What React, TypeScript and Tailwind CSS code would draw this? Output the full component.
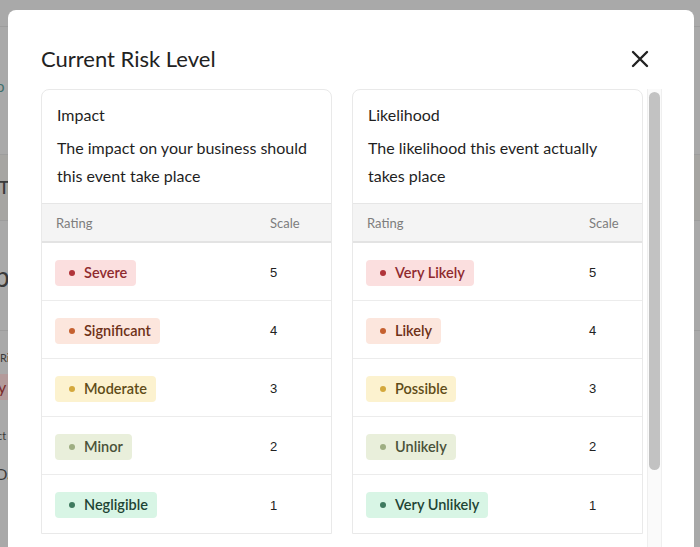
import React from "react";

type Item = { label: string; scale: number; bg: string; text: string; dot: string };

const impact: Item[] = [
  { label: "Severe", scale: 5, bg: "bg-[#fbdfdf]", text: "text-[#8f2a2e]", dot: "bg-[#b0343a]" },
  { label: "Significant", scale: 4, bg: "bg-[#fce6dd]", text: "text-[#6e3117]", dot: "bg-[#c5602f]" },
  { label: "Moderate", scale: 3, bg: "bg-[#fcf2cf]", text: "text-[#5f4c17]", dot: "bg-[#d4a83c]" },
  { label: "Minor", scale: 2, bg: "bg-[#e9efdb]", text: "text-[#4a5239]", dot: "bg-[#9eae82]" },
  { label: "Negligible", scale: 1, bg: "bg-[#d8f5e5]", text: "text-[#1e4434]", dot: "bg-[#3f7a5f]" },
];

const likelihood: Item[] = [
  { label: "Very Likely", scale: 5, bg: "bg-[#fbdfdf]", text: "text-[#8f2a2e]", dot: "bg-[#b0343a]" },
  { label: "Likely", scale: 4, bg: "bg-[#fce6dd]", text: "text-[#6e3117]", dot: "bg-[#c5602f]" },
  { label: "Possible", scale: 3, bg: "bg-[#fcf2cf]", text: "text-[#5f4c17]", dot: "bg-[#d4a83c]" },
  { label: "Unlikely", scale: 2, bg: "bg-[#e9efdb]", text: "text-[#4a5239]", dot: "bg-[#9eae82]" },
  { label: "Very Unlikely", scale: 1, bg: "bg-[#d8f5e5]", text: "text-[#1e4434]", dot: "bg-[#3f7a5f]" },
];

function Card({
  title,
  desc,
  items,
  cols,
}: {
  title: string;
  desc: React.ReactNode;
  items: Item[];
  cols: string;
}) {
  return (
    <div className="w-[291px] shrink-0 self-start rounded-t-lg border border-[#e9e9e9] bg-white">
      <div className="px-[15px] pt-[13px] pb-[13px] text-[#1f1f1f]">
        <div className="text-[16px] leading-[24px]">{title}</div>
        <div className="mt-[7px] whitespace-nowrap text-[16px] leading-[28px]">{desc}</div>
      </div>
      <div
        className={`grid ${cols} h-[40px] items-center border-t border-b-2 border-t-[#e6e6e6] border-b-[#e3e3e3] bg-[#f4f4f4] px-[14px] pt-[3px] text-[13px] text-[#7d7d7d]`}
      >
        <div>Rating</div>
        <div>Scale</div>
      </div>
      {items.map((it, i) => (
        <div
          key={it.label}
          className={`grid ${cols} h-[58px] items-center px-[13px] ${
            i < items.length - 1 ? "border-b border-[#ececec]" : ""
          }`}
        >
          <div>
            <span
              className={`inline-flex h-[26px] items-center gap-[9px] rounded-[4px] pl-[14px] pr-[9px] text-[14.5px] font-semibold ${it.bg} ${it.text}`}
            >
              <span className={`h-[6px] w-[6px] rounded-full ${it.dot}`} />
              {it.label}
            </span>
          </div>
          <div
            className="pt-[3px] pl-px text-[13px] text-[#222]"
            style={{ fontFamily: "'Liberation Sans', Arial, sans-serif" }}
          >
            {it.scale}
          </div>
        </div>
      ))}
    </div>
  );
}

export default function App() {
  return (
    <div
      className="relative h-[547px] w-[700px] overflow-hidden bg-[#a9a9a9]"
      style={{ fontFamily: "Lato, 'Noto Sans', sans-serif" }}
    >
      {/* dimmed page behind the modal */}
      <div className="flex flex-col text-[#3a3a3a]">
        <div className="h-[27px] border-b border-[#9d9d9d]" />
        <div className="flex h-[128px] items-center border-b border-[#9d9d9d] pb-[8px] text-[15px] text-[#3f6f6c]">
          <span className="-ml-[4px]">o</span>
        </div>
        <div className="flex h-[66px] items-center border-b border-[#9d9d9d] bg-[#a6a5a2] text-[17px] font-semibold">
          <span className="-ml-[1px]">Tr</span>
        </div>
        <div className="flex h-[110px] items-center border-b border-[#9d9d9d] text-[28px]">
          <span className="-ml-[6px]">b</span>
        </div>
        <div className="flex h-[35px] items-end text-[11px]">
          <span>Ri</span>
        </div>
        <div className="mt-[8px] flex h-[26px] w-[10px] items-center bg-[#b39a9a] text-[16px] text-[#7a2a2a]">
          <span className="-ml-[2px]">y</span>
        </div>
        <div className="mt-[28px] text-[11px]">
          <span className="-ml-[3px]">ct</span>
        </div>
        <div className="mt-[18px] text-[15px]">
          <span className="-ml-[4px]">Da</span>
        </div>
      </div>

      {/* modal */}
      <div className="absolute left-[8px] top-[10px] flex h-[600px] w-[686px] flex-col rounded-lg bg-white">
        <div className="flex items-center justify-between pl-[33px] pr-[45px] pt-[35px]">
          <h2 className="text-[22px] leading-[28px] text-[#222]">Current Risk Level</h2>
          <svg width="18" height="18" viewBox="0 0 18 18">
            <path d="M2 2 L16 16 M16 2 L2 16" stroke="#222" strokeWidth="2.4" strokeLinecap="round" />
          </svg>
        </div>
        <div className="mt-[16px] flex pl-[33px]">
          <div className="flex items-start gap-[20px]">
            <Card
              title="Impact"
              desc={
                <>
                  The impact on your business should
                  <br />
                  this event take place
                </>
              }
              items={impact}
              cols="grid-cols-[214px_1fr]"
            />
            <Card
              title="Likelihood"
              desc={
                <>
                  The likelihood this event actually
                  <br />
                  takes place
                </>
              }
              items={likelihood}
              cols="grid-cols-[222px_1fr]"
            />
          </div>
          <div className="ml-[4px] h-[520px] w-[15px] border-x border-[#efefef] bg-[#fafafa] px-[1px] pt-[3px]">
            <div className="h-[378px] w-[11px] rounded-full bg-[#c2c2c2]" />
          </div>
        </div>
      </div>
    </div>
  );
}
